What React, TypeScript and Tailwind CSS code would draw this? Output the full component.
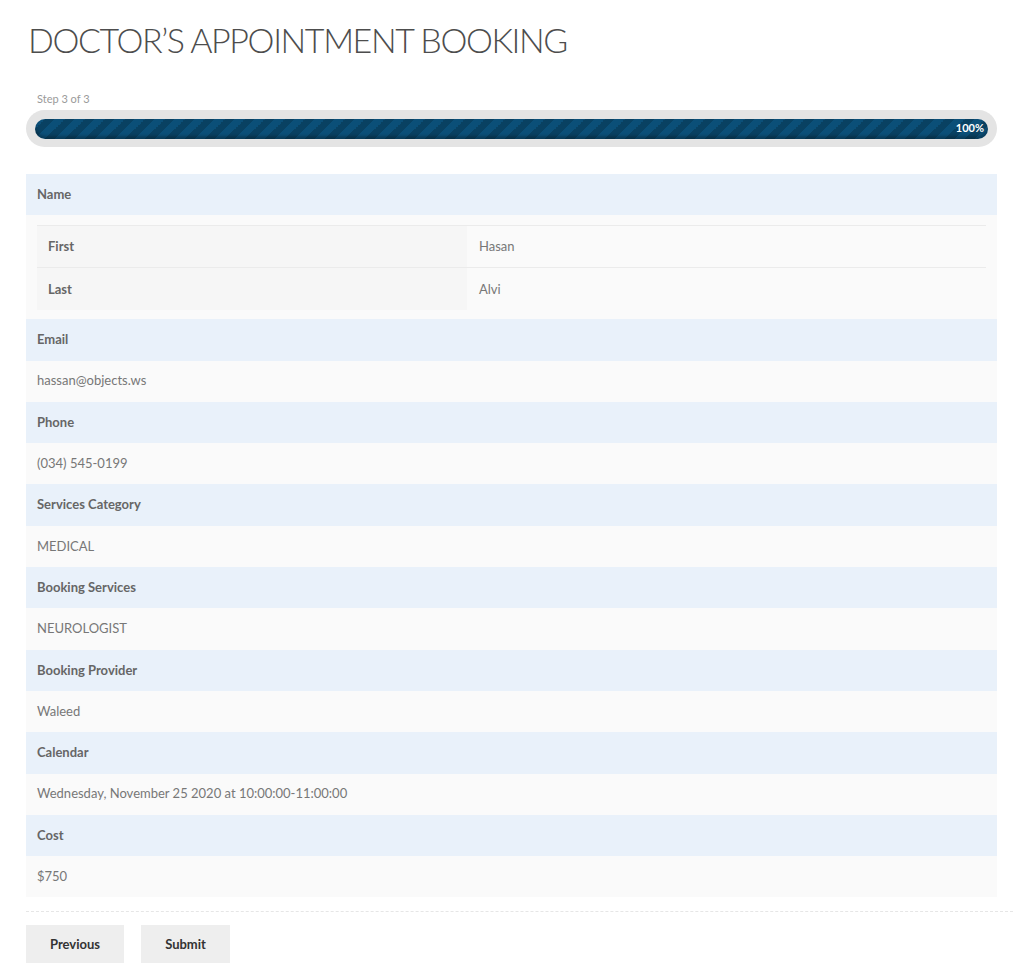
const rows: { label: string; value: string }[] = [
  { label: "Email", value: "hassan@objects.ws" },
  { label: "Phone", value: "(034) 545-0199" },
  { label: "Services Category", value: "MEDICAL" },
  { label: "Booking Services", value: "NEUROLOGIST" },
  { label: "Booking Provider", value: "Waleed" },
  { label: "Calendar", value: "Wednesday, November 25 2020 at 10:00:00-11:00:00" },
  { label: "Cost", value: "$750" },
];

function Header({ children }: { children: React.ReactNode }) {
  return (
    <div className="h-[41.3px] flex items-center px-[11px] bg-[#e9f1fa] text-[13px] font-bold text-[#666]">
      {children}
    </div>
  );
}

export default function App() {
  return (
    <div className="min-h-screen bg-white font-['Lato','Liberation_Sans',sans-serif]">
      <div className="pl-[26px] pr-[11px] pt-[20px]">
        <h1 className="pl-[2px] text-[34px] font-light leading-[40px] text-[#4d4d4d] tracking-[-1.4px]">
          DOCTOR’S APPOINTMENT BOOKING
        </h1>

        {/* progress */}
        <div className="mr-[16px] mt-[32px]">
          <div className="pl-[11px] text-[11px] leading-[14px] text-[#9a9a9a]">Step 3 of 3</div>
          <div className="mt-[4px] h-[37px] rounded-full bg-[#e4e4e4] p-[9px] flex items-center">
            <div className="relative h-[20px] w-full rounded-full bg-[#0b4f78] bg-[linear-gradient(-45deg,rgba(0,0,0,.18)_25%,transparent_25%,transparent_50%,rgba(0,0,0,.18)_50%,rgba(0,0,0,.18)_75%,transparent_75%,transparent)] bg-[length:20px_20px] shadow-[inset_0_-3px_3px_rgba(0,0,0,0.25)] flex items-center justify-end pr-[4px]">
              <span className="text-[11px] font-bold text-white">100%</span>
            </div>
          </div>
        </div>

        {/* summary */}
        <div className="mr-[16px] mt-[27px]">
          <Header>Name</Header>
          <div className="bg-[#fafafa] px-[11px] pt-[10px] pb-[9px]">
            <div className="border-t border-[#ebebeb]">
              {[
                ["First", "Hasan"],
                ["Last", "Alvi"],
              ].map(([k, v], i) => (
                <div
                  key={k}
                  className={`flex h-[42px] ${i === 0 ? "border-b border-[#ebebeb]" : ""}`}
                >
                  <div className="w-[430px] flex items-center pl-[11px] bg-[#f6f6f6] text-[13px] font-bold text-[#666]">
                    {k}
                  </div>
                  <div className="flex-1 flex items-center pl-[12px] text-[13px] text-[#777]">{v}</div>
                </div>
              ))}
            </div>
          </div>
          {rows.map((r) => (
            <div key={r.label}>
              <Header>{r.label}</Header>
              <div className="h-[41.3px] flex items-center px-[11px] bg-[#fafafa] text-[13px] text-[#777]">
                {r.value}
              </div>
            </div>
          ))}
        </div>

        <div className="mt-[14px] border-t border-dashed border-[#e6e6e6]" />

        <div className="mt-[13px] flex gap-[17px] pb-[14px]">
          <button className="h-[38px] w-[98px] bg-[#eeeeee] text-[13px] font-bold text-[#333]">
            Previous
          </button>
          <button className="h-[38px] w-[89px] bg-[#eeeeee] text-[13px] font-bold text-[#333]">
            Submit
          </button>
        </div>
      </div>
    </div>
  );
}
